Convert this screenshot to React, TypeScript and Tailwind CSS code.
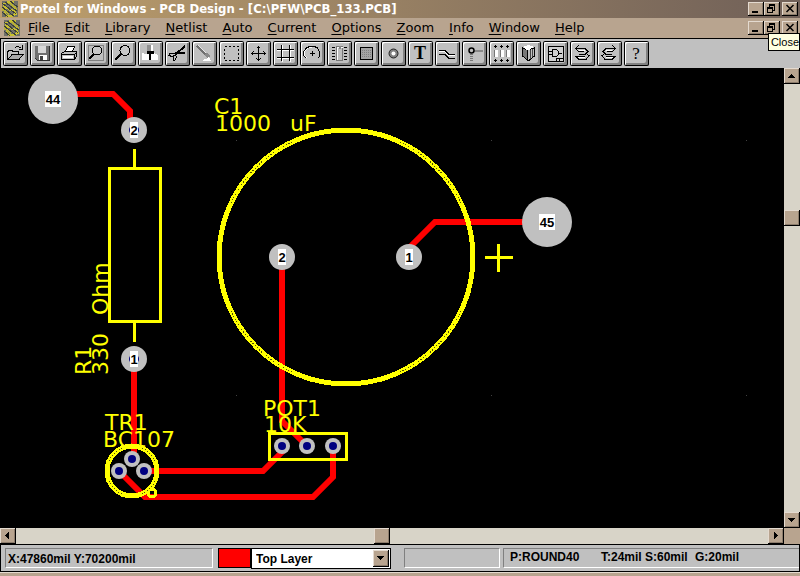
import type { ReactNode } from 'react';

const MENUS = ['File', 'Edit', 'Library', 'Netlist', 'Auto', 'Current', 'Options', 'Zoom', 'Info', 'Window', 'Help'];

const RAISED =
  'bg-[#b8a48f] shadow-[inset_-1px_-1px_0_#000,inset_1px_1px_0_#e4dacf,inset_-2px_-2px_0_#8c7c6c]';

const TOOLS: { name: string; art: ReactNode }[] = [
  {
    name: 'Open',
    art: (
      <>
        <path d="M4.500 18V10.500h1v-1h4v1h6v3" fill="none" stroke="#000" />
        <path d="M5 18.500L9 13.500h11l-4 5z" fill="#a8a8a8" stroke="#000" />
        <path d="M11.500 7.500l2-2h2l3 2M19.500 4v4.500h-4" fill="none" stroke="#000" />
      </>
    ),
  },
  {
    name: 'Save',
    art: (
      <>
        <path d="M5 5h15v15H7l-2-2z" fill="#303030" />
        <path d="M5 5h14v14H7l-2-2z" fill="#707070" />
        <path d="M8 5h8v7H8z" fill="#d8d8d8" />
        <path d="M9 14h8v5H9z" fill="#fff" />
        <path d="M10 15h3v4h-3z" fill="#404040" />
      </>
    ),
  },
  {
    name: 'Print',
    art: (
      <>
        <path d="M8.500 10.500l2-5h7l-2 5z" fill="#fff" stroke="#000" />
        <path d="M4.500 12.500l3-2h12v5l-2 3h-13z" fill="#c0c0c0" stroke="#000" />
        <path d="M5 13.500h12.500l2-2M17.500 13.500v5" fill="none" stroke="#000" />
        <path d="M6 15h10v2H6z" fill="#fff" />
      </>
    ),
  },
  {
    name: 'Zoom window',
    art: (
      <>
        <path d="M4.500 4.500h15v15h-15z" fill="none" stroke="#808080" />
        <circle cx="13" cy="9.500" r="4.500" fill="#c8c8c8" stroke="#000" />
        <path d="M5 18l5-5" stroke="#000" strokeWidth="2" />
      </>
    ),
  },
  {
    name: 'Zoom',
    art: (
      <>
        <circle cx="14" cy="9.500" r="5" fill="#c8c8c8" stroke="#000" />
        <path d="M4 19l6-6" stroke="#000" strokeWidth="2" />
      </>
    ),
  },
  {
    name: 'Redraw',
    art: (
      <>
        <path d="M4 12l4 1 2-1h6l1 1 3 1v5H4z" fill="#fff" />
        <path d="M9 4h6v6H9z" fill="#909090" />
        <path d="M13 4h2v6h-2z" fill="#fff" />
        <path d="M9 10h7v3H9zM11 13h2v6h-2z" fill="#000" />
      </>
    ),
  },
  {
    name: 'Cut',
    art: (
      <>
        <path d="M20 5L10 14" stroke="#000" strokeWidth="2" />
        <path d="M20 11.500h-7l-3 1" fill="none" stroke="#000" strokeWidth="2" />
        <path d="M10 12.500l-5 0-1 2 3 1 4-2M11 13l-3 3v3h2l2-4" fill="none" stroke="#000" />
      </>
    ),
  },
  {
    name: 'Paste',
    art: (
      <>
        <path d="M5 5l9 9" stroke="#707070" strokeWidth="2" />
        <path d="M6 4l9 9" stroke="#e8e8e8" />
        <path d="M12 14l3-2 3 3-2 3z" fill="#888" />
        <path d="M12 18h2l3-2 2 4h-8z" fill="#fff" />
      </>
    ),
  },
  {
    name: 'Select area',
    art: <path d="M5.500 5.500h14v14h-14z" fill="none" stroke="#000" strokeDasharray="2 2" />,
  },
  {
    name: 'Move',
    art: (
      <path
        d="M12.500 5v14M5 12.500h14M10.500 7.500l2-2 2 2M10.500 17.500l2 2 2-2M7.500 10.500l-2 2 2 2M17.500 10.500l2 2-2 2"
        fill="none"
        stroke="#000"
      />
    ),
  },
  {
    name: 'Grid',
    art: (
      <>
        <path d="M9.500 4v17M17.500 4v17M4 9.500h17M4 17.500h17" stroke="#fff" />
        <path d="M8.500 4v16M16.500 4v16M4 8.500h17M4 16.500h17" stroke="#000" />
      </>
    ),
  },
  {
    name: 'Arc',
    art: (
      <>
        <path d="M6.500 17l-2-3v-3l3-4 4-1" fill="none" stroke="#fff" />
        <path d="M5.500 17l-2-3v-3l3-4 4-2h3l4 2 2 4v4l-1 2" fill="none" stroke="#000" />
        <path d="M12.500 10v5M10 12.500h5" stroke="#000" />
      </>
    ),
  },
  {
    name: 'Component',
    art: (
      <>
        <path d="M6.500 6v14M18.500 6v14" stroke="#000" strokeWidth="3" strokeDasharray="1 2" />
        <path d="M9.500 5.500h6v14h-6z" fill="#c0c0c0" stroke="#777" />
        <path d="M10.500 19V6.500h5" fill="none" stroke="#fff" />
        <path d="M12 5h2v3h-2z" fill="#888" />
      </>
    ),
  },
  {
    name: 'Fill',
    art: (
      <>
        <path d="M6.500 6.500h12v12h-12z" fill="#a4a4a4" stroke="#000" />
        <path d="M8 9h9M8 11h9M8 13h9M8 15h9" stroke="#808080" strokeDasharray="1 1" />
      </>
    ),
  },
  {
    name: 'Pad',
    art: (
      <>
        <circle cx="12.500" cy="12.500" r="4.500" fill="#808080" stroke="#222" shapeRendering="auto" />
        <circle cx="12.500" cy="12.500" r="2" fill="#fff" shapeRendering="auto" />
      </>
    ),
  },
  {
    name: 'Text',
    art: (
      <text x="12" y="18" textAnchor="middle" className="font-['Liberation_Serif',serif] text-[18px] font-bold">
        T
      </text>
    ),
  },
  {
    name: 'Track',
    art: (
      <>
        <path d="M4 10.500h6l4 4h6" fill="none" stroke="#fff" />
        <path d="M4 9.500h6l4 4h6M4 13.500h6l4 4h6" fill="none" stroke="#000" />
      </>
    ),
  },
  {
    name: 'Via',
    art: (
      <>
        <path d="M12 9.500h9" stroke="#888" strokeWidth="2" />
        <path d="M9.500 13v8" stroke="#777" strokeWidth="3" strokeDasharray="1 1" />
        <circle cx="9.500" cy="9.500" r="2.500" fill="#c0c0c0" stroke="#000" strokeWidth="1.500" shapeRendering="auto" />
      </>
    ),
  },
  {
    name: 'Place array',
    art: (
      <>
        {[6.5, 12.5, 18.5].map((x) => (
          <g key={x}>
            <path d={`M${x - 1} 9h3v7h-3z`} fill="#fff" />
            <path d={`M${x - 1} 9v7`} stroke="#777" />
            <path d={`M${x} 4v3M${x - 1.5} 5.500h3M${x} 18v3M${x - 1.5} 19.500h3`} stroke="#000" />
          </g>
        ))}
      </>
    ),
  },
  {
    name: 'Library',
    art: (
      <>
        <path d="M6.500 7v8l5 4V9z" fill="#777" stroke="#000" />
        <path d="M18.500 7v8l-5 4h-2V9z" fill="#c0c0c0" stroke="#000" />
        <path d="M7 6l5-2 6 2-5 3h-2z" fill="#fff" />
        <path d="M14 9v9M16 8v8" stroke="#444" />
      </>
    ),
  },
  {
    name: 'Schematic',
    art: (
      <>
        <path d="M5.500 5.500h15v15h-15z" fill="#d0d0d0" stroke="#000" />
        <path d="M9.500 8.500h4l2 2v3l-2 2h-4zM6 10.500h3M6 13.500h3M16 12.500h3" fill="none" stroke="#000" />
        <path d="M13 17.500h7M13.500 17v3M16.500 17v3" stroke="#000" />
      </>
    ),
  },
  {
    name: 'Undo',
    art: (
      <>
        <path d="M9 4L5.500 7.500 9 11M5 7.500h10l3 3-3 3H9" fill="none" stroke="#000" />
        <path d="M9 10.500h5M16 12.500l3 2-3 4H9l-3-3h9" fill="none" stroke="#000" />
        <path d="M9 9.500h6M8 16.500h7" stroke="#fff" />
      </>
    ),
  },
  {
    name: 'Redo',
    art: (
      <>
        <path d="M15 4l3.500 3.500L15 11M19 7.500H9l-3 3 3 3h6" fill="none" stroke="#000" />
        <path d="M15 10.500h-5M8 12.500l-3 2 3 4h7l3-3H9" fill="none" stroke="#000" />
        <path d="M15 9.500H9M16 16.500H9" stroke="#fff" />
      </>
    ),
  },
  {
    name: 'Help',
    art: (
      <text x="12" y="18" textAnchor="middle" className="font-['Liberation_Serif',serif] text-[17px]">
        ?
      </text>
    ),
  },
];

function AppIcon() {
  return (
    <svg viewBox="0 0 16 16" className="h-4 w-4 shrink-0" shapeRendering="crispEdges" aria-hidden="true">
      <path d="M0 0h16v16H0z" fill="#707068" />
      <path d="M1 4l7 5M0 8l7 5M6 1l8 6M9 5l6 4" stroke="#b8b038" strokeWidth="2" />
      <path d="M12 1H6L2 3v3l10 4 2 3-4 2H5l-3-3" fill="none" stroke="#c8c030" strokeWidth="2" />
      <path d="M0 2l14 11M0 6l12 9M3 1l12 9M8 0l8 6M0 11l6 5" stroke="#3c4038" />
    </svg>
  );
}

function WindowButtons({ label }: { label: string }) {
  const box = `h-3.5 w-4 shrink-0 ${RAISED}`;
  return (
    <div className="ml-auto flex pr-0.5">
      <button type="button" aria-label={`Minimize ${label}`} className={box}>
        <svg viewBox="0 0 16 14" className="h-3.5 w-4" shapeRendering="crispEdges">
          <path d="M4 9h6v2H4z" />
        </svg>
      </button>
      <button type="button" aria-label={`Restore ${label}`} className={box}>
        <svg viewBox="0 0 16 14" className="h-3.5 w-4" shapeRendering="crispEdges">
          <path d="M5 2h6v2H5zM3 5h6v2H3z" />
          <path d="M5.500 4v1M10.500 4v4.500H9M3.500 7v3.500h5V7" fill="none" stroke="#000" />
        </svg>
      </button>
      <button type="button" aria-label={`Close ${label}`} className={`ml-0.5 ${box}`}>
        <svg viewBox="0 0 16 14" className="h-3.5 w-4">
          <path d="M4.500 3l7 7M11.500 3l-7 7" stroke="#000" strokeWidth="1.500" />
        </svg>
      </button>
    </div>
  );
}

function ScrollButton({ label, d }: { label: string; d: string }) {
  return (
    <button type="button" aria-label={label} className={`h-4 w-4 shrink-0 ${RAISED}`}>
      <svg viewBox="0 0 16 16" className="h-4 w-4" shapeRendering="crispEdges">
        <path d={d} />
      </svg>
    </button>
  );
}

function PinLabel({ x, y, children }: { x: number; y: number; children: string }) {
  const w = children.length * 8;
  return (
    <>
      <rect x={x - w / 2} y={y - 8} width={w} height={16} fill="#fff" />
      <text x={x} y={y + 5} textAnchor="middle" className="fill-black font-['Liberation_Sans',sans-serif] text-[13px] font-bold">
        {children}
      </text>
    </>
  );
}

const BIG_PADS = [
  { x: 53, y: 99, r: 25, pin: '44' },
  { x: 547, y: 222, r: 25, pin: '45' },
  { x: 134, y: 130, r: 13, pin: '2' },
  { x: 134, y: 359, r: 13, pin: '1' },
  { x: 282, y: 257, r: 13, pin: '2' },
  { x: 409, y: 257, r: 13, pin: '1' },
];

const SMALL_PADS = [
  [132, 459],
  [119, 471],
  [144, 471],
  [282, 446],
  [307, 446],
  [333, 446],
];

function Board() {
  return (
    <svg className="block h-full w-full bg-black" role="img" aria-label="PCB layout">
      {/* board coordinates start below the toolbar */}
      <g transform="translate(0 -68)">
        <g fill="none" stroke="#f00" strokeWidth="6">
          <path d="M75 94H113L130 111V125" />
          <path d="M134 359V452L132 459" />
          <path d="M144 471H263L282 452V446" />
          <path d="M119 471L145 497H313L333 477V446" />
          <path d="M282 257V421L307 446" />
          <path d="M547 222H435L409 248" />
        </g>

        {BIG_PADS.map((p) => (
          <circle key={`${p.x}-${p.y}`} cx={p.x} cy={p.y} r={p.r} fill="#c0c0c0" />
        ))}
        {[130, 359].map((y) => (
          <circle key={y} cx={134} cy={y} r={5} fill="#000080" />
        ))}
        {SMALL_PADS.map(([x, y]) => (
          <g key={`${x}-${y}`}>
            <circle cx={x} cy={y} r={8} fill="#c0c0c0" />
            <circle cx={x} cy={y} r={4} fill="#000080" />
          </g>
        ))}

        <g fill="none" stroke="#ff0" strokeWidth="3" shapeRendering="crispEdges">
          <rect x="109.500" y="168.500" width="51" height="153" />
          <path d="M134.500 149V168M134.500 322V342" />
          <rect x="269.500" y="433.500" width="77" height="26" />
          <path d="M485 257.500H513M498.500 244V272" />
          <circle cx="346" cy="257" r="127" strokeWidth="5" />
          <circle cx="132" cy="471" r="25" strokeWidth="5" />
          <circle cx="152" cy="493" r="4" />
        </g>
        {/* the round outlines are only partly filled on the diagonals */}
        <g fill="none" stroke="#000" strokeOpacity="0.7" strokeDasharray="1 2" shapeRendering="crispEdges">
          {[0, 90, 180, 270].map((angle) => (
            <g key={angle}>
              <path d="M115 54A127 127 0 0 1 54 115" transform={`translate(346 257) rotate(${angle})`} />
              <path d="M23 10A25 25 0 0 1 10 23" transform={`translate(132 471) rotate(${angle})`} />
            </g>
          ))}
        </g>

        <g className="fill-[#ff0] font-['DejaVu_Sans',sans-serif] text-[22px]">
          <text x="214" y="114">C1</text>
          <text x="215" y="131">
            1000 <tspan x="290">uF</tspan>
          </text>
          <text x="263" y="416">POT1</text>
          <text x="264" y="432">10K</text>
          <text x="105" y="430">TR1</text>
          <text x="103" y="447">BC107</text>
          <text transform="translate(91 375) rotate(-90)">R1</text>
          <text transform="translate(108 375) rotate(-90)">
            330 <tspan x="60">Ohm</tspan>
          </text>
        </g>

        {BIG_PADS.map((p) => (
          <PinLabel key={`${p.x}-${p.y}`} x={p.x} y={p.y}>
            {p.pin}
          </PinLabel>
        ))}

        <path
          d="M236 140h1M491 140h1M746 140h1M236 395h1M491 395h1M746 395h1"
          stroke="#404040"
          shapeRendering="crispEdges"
        />
      </g>
    </svg>
  );
}

export default function App() {
  const cell = 'h-5 shrink-0 border border-t-[#808080] border-l-[#808080] border-r-white border-b-white';

  return (
    <div className="relative flex h-screen flex-col overflow-hidden bg-[#b8a48f] font-['DejaVu_Sans',sans-serif] text-xs text-black">
      <header className="flex h-[18px] shrink-0 items-center gap-0.5 bg-linear-to-r from-[#bfa06c] to-[#706058] pl-0.5">
        <AppIcon />
        <h1 className="font-['DejaVu_Sans_Condensed','DejaVu_Sans',sans-serif] text-[13px] leading-4 font-bold whitespace-nowrap text-white">
          Protel for Windows - PCB Design - [C:\PFW\PCB_133.PCB]
        </h1>
        <WindowButtons label="application" />
      </header>

      <nav className="flex h-5 shrink-0 items-center pl-1">
        <AppIcon />
        <div className="flex gap-[15px] pl-2 text-[13px] leading-4">
          {MENUS.map((menu) => (
            <button key={menu} type="button" className="whitespace-nowrap">
              <span className="underline underline-offset-2">{menu[0]}</span>
              {menu.slice(1)}
            </button>
          ))}
        </div>
        <WindowButtons label="document" />
      </nav>

      <div className="flex h-[30px] shrink-0 gap-0.5 border-t border-l border-black bg-[#c0c0c0] pt-0.5 pl-0.5">
        {TOOLS.map((tool) => (
          <button
            key={tool.name}
            type="button"
            aria-label={tool.name}
            className="h-[25px] w-[25px] shrink-0 rounded-xs bg-[#c0c0c0] shadow-[inset_0_0_0_1px_#000,inset_2px_2px_0_#fff,inset_-3px_-3px_0_#808080]"
          >
            <svg viewBox="0 0 25 25" className="h-[25px] w-[25px]" shapeRendering="crispEdges">
              {tool.art}
            </svg>
          </button>
        ))}
      </div>

      <div className="flex min-h-0 flex-1">
        <main className="min-w-0 flex-1">
          <Board />
        </main>
        <div className="flex w-4 shrink-0 flex-col bg-[#d8d4c8]">
          <ScrollButton label="Scroll up" d="M7 6h1v1h1v1h1v1h1v1H4V9h1V8h1V7h1z" />
          <div className="grow-[126]" />
          <div className={`h-4 shrink-0 ${RAISED}`} />
          <div className="grow-[285]" />
          <ScrollButton label="Scroll down" d="M4 6h7v1h-1v1H9v1H8v1H7V9H6V8H5V7H4z" />
        </div>
      </div>

      <div className="flex h-4 shrink-0 pr-4">
        <div className="flex flex-1 bg-[#d8d4c8]">
          <ScrollButton label="Scroll left" d="M9 4v7H8v-1H7V9H6V8H5V7h1V6h1V5h1V4z" />
          <div className="grow-[358]" />
          <div className={`w-4 shrink-0 ${RAISED}`} />
          <div className="grow-[378]" />
          <ScrollButton label="Scroll right" d="M6 4v7h1v-1h1V9h1V8h1V7H9V6H8V5H7V4z" />
        </div>
      </div>

      <footer className="flex h-7 shrink-0 items-start border border-black bg-[#c0c0c0] pt-[3px] pl-1 font-['Liberation_Sans',sans-serif] text-xs font-bold whitespace-pre">
        <div className={`w-52 pl-0.5 leading-5 ${cell}`}>X:47860mil Y:70200mil</div>
        <div className="ml-[5px] h-5 w-[33px] shrink-0 border border-black bg-[#f00]" />
        <div className="relative shrink-0">
          <select
            aria-label="Current layer"
            className="block h-[21px] w-[140px] appearance-none border border-black bg-white pl-1 font-bold"
            defaultValue="Top Layer"
          >
            <option>Top Layer</option>
            <option>Bottom Layer</option>
          </select>
          <svg
            viewBox="0 0 16 17"
            className={`pointer-events-none absolute top-0.5 right-0.5 h-[17px] w-4 ${RAISED}`}
            shapeRendering="crispEdges"
          >
            <path d="M4 6h7v1h-1v1H9v1H8v1H7V9H6V8H5V7H4z" />
          </svg>
        </div>
        <div className={`ml-[13px] w-24 ${cell}`} />
        <div className="ml-[3px] flex h-5 flex-1 border-t border-b border-l border-t-[#808080] border-b-white border-l-[#808080] pl-1.5 leading-4">
          <span className="w-[91px]">P:ROUND40</span>
          <span className="w-11">T:24mil</span>
          <span className="w-[50px]">S:60mil</span>
          <span>G:20mil</span>
        </div>
      </footer>
      <div className="h-1 shrink-0 border-t border-[#e4dacf]" />

      <div
        role="tooltip"
        className="absolute top-[33px] right-0 h-[18px] border border-black bg-[#ffffe1] pl-0.5 font-['Liberation_Sans',sans-serif] text-[11px] leading-4"
      >
        Close
      </div>
    </div>
  );
}
